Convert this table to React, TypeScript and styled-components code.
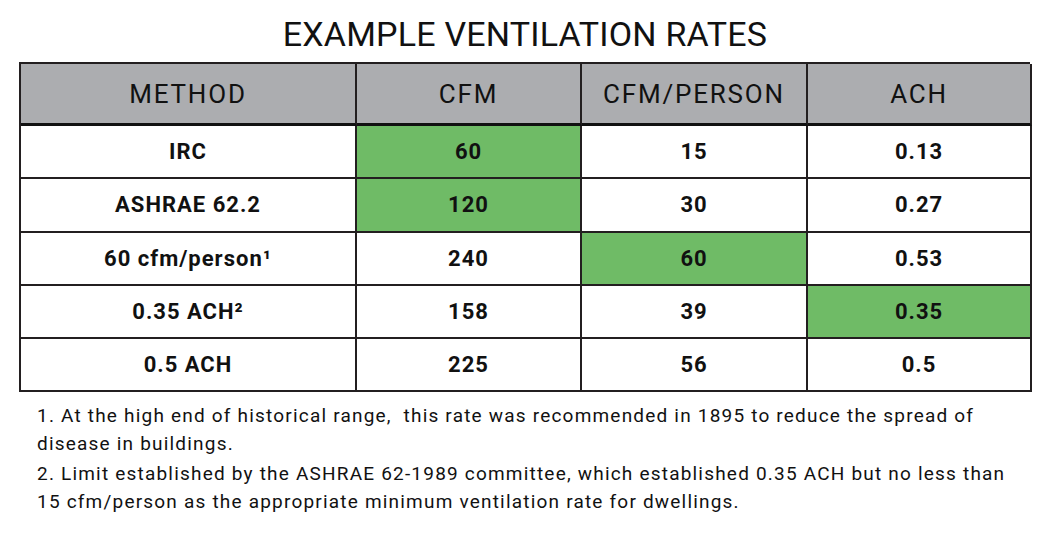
import React from 'react';
import styled, { createGlobalStyle } from 'styled-components';

interface RateRow {
  method: string;
  cfm: string;
  perPerson: string;
  ach: string;
  // which column is highlighted green (1 = CFM, 2 = CFM/PERSON, 3 = ACH)
  highlight: number;
}

const rows: RateRow[] = [
  { method: 'IRC', cfm: '60', perPerson: '15', ach: '0.13', highlight: 1 },
  { method: 'ASHRAE 62.2', cfm: '120', perPerson: '30', ach: '0.27', highlight: 1 },
  { method: '60 cfm/person¹', cfm: '240', perPerson: '60', ach: '0.53', highlight: 2 },
  { method: '0.35 ACH²', cfm: '158', perPerson: '39', ach: '0.35', highlight: 3 },
  { method: '0.5 ACH', cfm: '225', perPerson: '56', ach: '0.5', highlight: 0 },
];

const headings = ['METHOD', 'CFM', 'CFM/PERSON', 'ACH'];

const footnotes = [
  '1. At the high end of historical range,\u00a0 this rate was recommended in 1895 to reduce the spread of disease in buildings.',
  '2. Limit established by the ASHRAE 62-1989 committee, which established 0.35 ACH but no less than 15 cfm/person as the appropriate minimum ventilation rate for dwellings.',
];

const GlobalStyle = createGlobalStyle`
  html, body {
    margin: 0;
    padding: 0;
    background: #ffffff;
  }
  body {
    font-family: Roboto, "Liberation Sans", sans-serif;
    color: #231f20;
  }
`;

const App: React.FC = () => {
  return (
    <>
      <GlobalStyle />
      <Page>
        <Title>EXAMPLE VENTILATION RATES</Title>
        <Table>
          {headings.map(h => (
            <HeadCell key={h}>{h}</HeadCell>
          ))}
          {rows.map(row => (
            <React.Fragment key={row.method}>
              <Cell>{row.method}</Cell>
              <Cell $green={row.highlight === 1}>{row.cfm}</Cell>
              <Cell $green={row.highlight === 2}>{row.perPerson}</Cell>
              <Cell $green={row.highlight === 3}>{row.ach}</Cell>
            </React.Fragment>
          ))}
        </Table>
        <Notes>
          {footnotes.map((n, i) => (
            <Note key={i}>{n}</Note>
          ))}
        </Notes>
      </Page>
    </>
  );
};

const Page = styled.div`
  width: 1050px;
  height: 540px;
  box-sizing: border-box;
  padding: 14px 19px 0 19px;
`;

const Title = styled.h1`
  margin: 0 0 8px;
  text-align: center;
  font-size: 34px;
  line-height: 40px;
  font-weight: 400;
  letter-spacing: 0.2px;
  color: #111;
`;

const Table = styled.div`
  display: grid;
  grid-template-columns: 336px 225px 226px 224px;
  grid-template-rows: 62px repeat(5, 53.3px);
  width: 1011px;
  box-sizing: border-box;
  border-top: 2px solid #231f20;
  border-left: 2px solid #231f20;
`;

const HeadCell = styled.div`
  display: flex;
  align-items: center;
  justify-content: center;
  background: #acadb0;
  border-right: 2px solid #231f20;
  border-bottom: 3px solid #111;
  font-size: 26px;
  font-weight: 400;
  letter-spacing: 1.8px;
  color: #111;
`;

const Cell = styled.div<{ $green?: boolean }>`
  display: flex;
  align-items: center;
  justify-content: center;
  background: ${p => (p.$green ? '#6fbb66' : '#ffffff')};
  border-right: 2px solid #231f20;
  border-bottom: 2px solid #231f20;
  font-size: 22px;
  font-weight: 700;
  letter-spacing: 1px;
  color: #111;
`;

const Notes = styled.div`
  padding: 10px 0 0 18px;
  width: 975px;
`;

const Note = styled.p`
  margin: 0 0 2px;
  font-size: 19px;
  line-height: 28px;
  letter-spacing: 1.2px;
  color: #111;
`;

export default App;
